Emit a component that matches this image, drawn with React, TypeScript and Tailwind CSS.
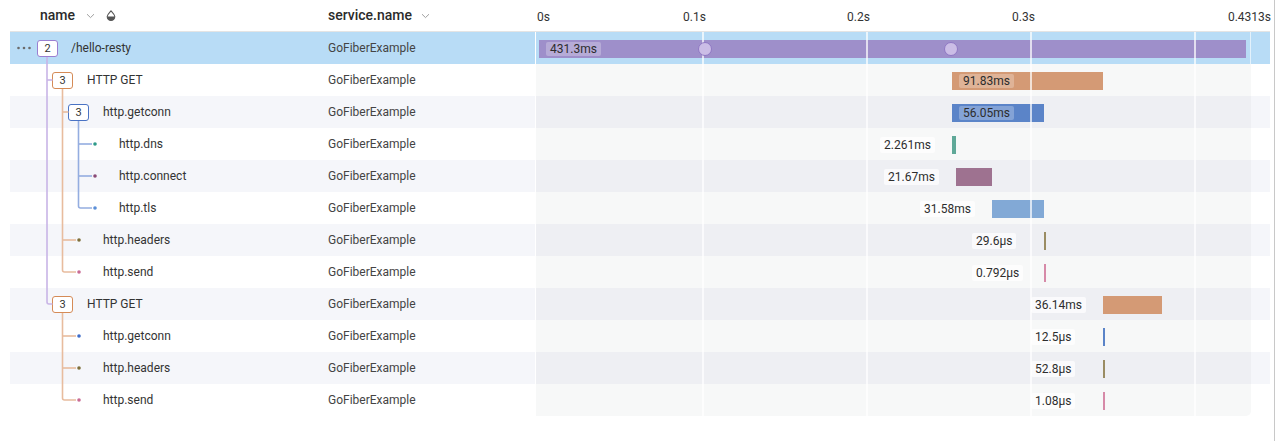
import React from "react";

type Row = {
  name: string;
  kind: "root" | "badge1" | "badge2" | "leaf2" | "leaf3";
  count?: string;
  badgeColor?: string;
  start: number; // page x
  end: number; // page x
  color: string;
  label: string;
  inside: boolean;
};

const rows: Row[] = [
  { name: "/hello-resty", kind: "root", count: "2", badgeColor: "border-[#9a7fd1]", start: 539, end: 1246, color: "#9e8fca", label: "431.3ms", inside: true },
  { name: "HTTP GET", kind: "badge1", count: "3", badgeColor: "border-[#d58b57]", start: 952, end: 1103, color: "#d49a75", label: "91.83ms", inside: true },
  { name: "http.getconn", kind: "badge2", count: "3", badgeColor: "border-[#4a73c4]", start: 952, end: 1044, color: "#5b84c8", label: "56.05ms", inside: true },
  { name: "http.dns", kind: "leaf3", start: 952, end: 956, color: "#5fa898", label: "2.261ms", inside: false },
  { name: "http.connect", kind: "leaf3", start: 956, end: 992, color: "#9e7290", label: "21.67ms", inside: false },
  { name: "http.tls", kind: "leaf3", start: 992, end: 1044, color: "#82a9d6", label: "31.58ms", inside: false },
  { name: "http.headers", kind: "leaf2", start: 1044, end: 1046, color: "#9a8c63", label: "29.6µs", inside: false },
  { name: "http.send", kind: "leaf2", start: 1044, end: 1046, color: "#d68aa8", label: "0.792µs", inside: false },
  { name: "HTTP GET", kind: "badge1", count: "3", badgeColor: "border-[#d58b57]", start: 1103, end: 1162, color: "#d49a75", label: "36.14ms", inside: false },
  { name: "http.getconn", kind: "leaf2", start: 1103, end: 1105, color: "#5b84c8", label: "12.5µs", inside: false },
  { name: "http.headers", kind: "leaf2", start: 1103, end: 1105, color: "#9a8c63", label: "52.8µs", inside: false },
  { name: "http.send", kind: "leaf2", start: 1103, end: 1105, color: "#d68aa8", label: "1.08µs", inside: false },
];

const CELL_X = 536;
const gridX = [703, 867, 1031, 1195];

function Chevron({ gap }: { gap: string }) {
  return (
    <svg width="9" height="6" viewBox="0 0 9 6" className={gap}>
      <path d="M1 1.2 L4.5 4.6 L8 1.2" fill="none" stroke="#a0a0a0" strokeWidth="1" />
    </svg>
  );
}

function DropIcon() {
  return (
    <svg width="10" height="11" viewBox="0 0 10 11" className="ml-[11px]">
      <path d="M5 0.8 C3.6 2.4 1.2 4.4 1.2 6.6 A3.8 3.8 0 0 0 8.8 6.6 C8.8 4.4 6.4 2.4 5 0.8 Z" fill="none" stroke="#555" strokeWidth="1.1" />
      <path d="M1.2 6.4 A3.8 3.8 0 0 0 8.8 6.4 Z" fill="#555" />
    </svg>
  );
}

function TreeLines() {
  const ox = 10;
  const oy = 32;
  const purple = "#c9b5e6";
  const orange = "#e8bc9e";
  const blue = "#94ade0";
  const cy = (i: number) => 48 + 32 * i - oy;
  const X = (x: number) => x - ox;
  const L = (x: number, y1: number, y2: number, x2: number) =>
    `M${X(x)} ${y1 - oy} V${y2 - oy - 2} Q${X(x)} ${y2 - oy} ${X(x) + 2} ${y2 - oy} H${X(x2)}`;
  const H = (x: number, i: number, x2: number) => `M${X(x)} ${cy(i)} H${X(x2)}`;
  const dots: [number, number, string][] = [
    [95, 3, "#2e9a88"],
    [95, 4, "#8a4a76"],
    [95, 5, "#5b8fd8"],
    [79, 6, "#7d6f3a"],
    [79, 7, "#c96b95"],
    [79, 9, "#3e6cc8"],
    [79, 10, "#7d6f3a"],
    [79, 11, "#c96b95"],
  ];
  return (
    <svg className="absolute left-0 top-0 pointer-events-none" width="308" height="384" viewBox="0 0 308 384">
      <circle cx={X(18.5)} cy={cy(0)} r="1.3" fill="#6b6b6b" />
      <circle cx={X(24)} cy={cy(0)} r="1.3" fill="#6b6b6b" />
      <circle cx={X(29.5)} cy={cy(0)} r="1.3" fill="#6b6b6b" />
      <path d={L(47, 57, 304, 52.5)} fill="none" stroke={purple} strokeWidth="1.6" />
      <path d={H(47, 1, 52.5)} fill="none" stroke={purple} strokeWidth="1.6" />
      <path d={L(62.5, 89, 272, 76)} fill="none" stroke={orange} strokeWidth="1.6" />
      <path d={H(62.5, 2, 68.5)} fill="none" stroke={orange} strokeWidth="1.6" />
      <path d={H(62.5, 6, 76)} fill="none" stroke={orange} strokeWidth="1.6" />
      <path d={L(78.5, 121, 208, 92)} fill="none" stroke={blue} strokeWidth="1.6" />
      <path d={H(78.5, 3, 92)} fill="none" stroke={blue} strokeWidth="1.6" />
      <path d={H(78.5, 4, 92)} fill="none" stroke={blue} strokeWidth="1.6" />
      <path d={L(62.5, 313, 400, 76)} fill="none" stroke={orange} strokeWidth="1.6" />
      <path d={H(62.5, 9, 76)} fill="none" stroke={orange} strokeWidth="1.6" />
      <path d={H(62.5, 10, 76)} fill="none" stroke={orange} strokeWidth="1.6" />
      {dots.map(([x, i, c], k) => (
        <circle key={k} cx={X(x)} cy={cy(i)} r="1.8" fill={c} />
      ))}
    </svg>
  );
}

function NameCell({ row }: { row: Row }) {
  const badge = (
    <div
      className={`w-[21px] h-[17px] shrink-0 rounded-[3px] border-[1.5px] bg-white flex items-center justify-center text-[11px] leading-none text-[#333] ${row.badgeColor ?? ""}`}
    >
      {row.count}
    </div>
  );
  if (row.kind === "root") {
    return (
      <div className="w-[308px] shrink-0 flex items-center pl-[27px]">
        {badge}
        <span className="ml-[13px]">{row.name}</span>
      </div>
    );
  }
  if (row.kind === "badge1") {
    return (
      <div className="w-[308px] shrink-0 flex items-center pl-[42px]">
        {badge}
        <span className="ml-[14px]">{row.name}</span>
      </div>
    );
  }
  if (row.kind === "badge2") {
    return (
      <div className="w-[308px] shrink-0 flex items-center pl-[58px]">
        {badge}
        <span className="ml-[14px]">{row.name}</span>
      </div>
    );
  }
  if (row.kind === "leaf2") {
    return (
      <div className="w-[308px] shrink-0 flex items-center pl-[93px]">
        <span>{row.name}</span>
      </div>
    );
  }
  return (
    <div className="w-[308px] shrink-0 flex items-center pl-[109px]">
      <span>{row.name}</span>
    </div>
  );
}

function TimelineCell({ row, index, last }: { row: Row; index: number; last: boolean }) {
  const selected = index === 0;
  const gray = index % 2 === 0;
  const bg = selected ? "bg-[#b8dcf6]" : gray ? "bg-[#eeeff3]" : "bg-[#f7f8f8]";
  const left = row.start - CELL_X;
  const width = row.end - row.start;
  return (
    <div
      className={`relative w-[716px] shrink-0 border-l border-white ${bg} ${last ? "rounded-br-[5px]" : ""} ${selected ? "border-r border-r-white/60" : ""}`}
    >
      <div
        className="absolute top-[8px] h-[18px]"
        style={{ left, width, backgroundColor: row.color }}
      />
      {row.inside ? (
        <div
          className="absolute top-[10px] h-[14px] px-[4px] rounded-[2px] bg-white/25 text-[12px] leading-[14px] text-[#2d2d2d]"
          style={{ left: left + 7 }}
        >
          {row.label}
        </div>
      ) : (
        <div
          className="absolute top-[9px] h-[16px] px-[4px] rounded-[2px] bg-white/70 text-[12px] leading-[16px] text-[#2d2d2d]"
          style={{ left: left - 72 }}
        >
          {row.label}
        </div>
      )}
      {gridX.map((x) => (
        <div
          key={x}
          className="absolute top-0 bottom-0 w-[1.5px] bg-white/70"
          style={{ left: x - CELL_X - 1 }}
        />
      ))}
      {selected && (
        <>
          <div className="absolute top-[10px] left-[162px] w-[14px] h-[14px] rounded-full bg-[#cbbde6] border border-[#8f78c4]" />
          <div className="absolute top-[10px] left-[408px] w-[14px] h-[14px] rounded-full bg-[#cbbde6] border border-[#8f78c4]" />
        </>
      )}
    </div>
  );
}

export default function App() {
  return (
    <div
      className="w-[1276px] h-[441px] bg-white flex overflow-hidden text-[#333]"
      style={{ fontFamily: "Roboto, 'Liberation Sans', sans-serif" }}
    >
      <div className="w-[1275px] h-full border-r border-[#c8c8c8]">
        <div className="ml-[10px] w-[1260px] h-[32px] flex border-b border-[#e4e4e4]">
          <div className="w-[308px] shrink-0 flex items-center pl-[30px] text-[14px] font-medium text-[#2b2b2b]">
            <span>name</span>
            <Chevron gap="ml-[11px]" />
            <DropIcon />
          </div>
          <div className="w-[217px] shrink-0 flex items-center pl-[10px] text-[14px] font-medium text-[#2b2b2b]">
            <span>service.name</span>
            <Chevron gap="ml-[9px]" />
          </div>
          <div className="relative w-[716px] shrink-0 text-[12px] text-[#333]">
            <span className="absolute top-[8px] left-[2px]">0s</span>
            <span className="absolute top-[8px] left-[148px]">0.1s</span>
            <span className="absolute top-[8px] left-[312px]">0.2s</span>
            <span className="absolute top-[8px] left-[477px]">0.3s</span>
            <span className="absolute top-[8px] right-[-20px]">0.4313s</span>
          </div>
        </div>
        <div className="relative ml-[10px] w-[1260px] flex flex-col text-[12px]">
          {rows.map((row, i) => {
            const selected = i === 0;
            const gray = i % 2 === 0;
            const rowBg = selected ? "bg-[#b8dcf6]" : gray ? "bg-[#f5f6fa]" : "bg-white";
            return (
              <div key={i} className={`h-[32px] flex ${rowBg}`}>
                <NameCell row={row} />
                <div className="w-[217px] shrink-0 flex items-center pl-[10px] text-[#444]">GoFiberExample</div>
                <TimelineCell row={row} index={i} last={i === rows.length - 1} />
                <div className="w-[19px] shrink-0" />
              </div>
            );
          })}
          <TreeLines />
        </div>
      </div>
    </div>
  );
}
